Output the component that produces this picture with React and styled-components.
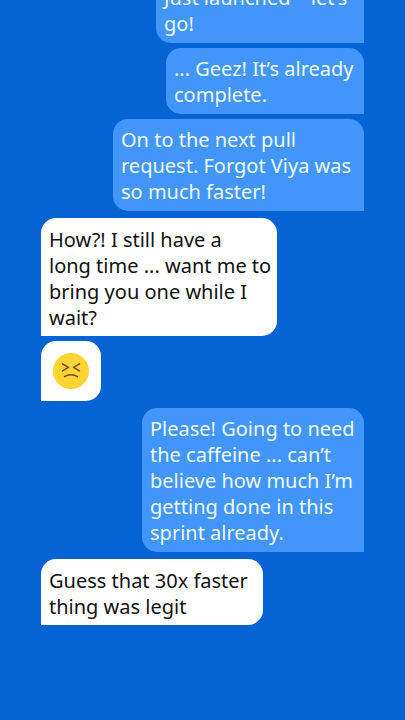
import React from 'react';
import styled, { createGlobalStyle } from 'styled-components';

const GlobalStyle = createGlobalStyle`
  * {
    box-sizing: border-box;
  }
  body {
    margin: 0;
    background: #0563d3;
  }
`;

// newest message stays above the bottom edge, older ones run off the top
const Screen = styled.main`
  display: flex;
  flex-direction: column;
  justify-content: flex-end;
  gap: 7px;
  height: 100vh;
  padding: 0 41px 95px;
  overflow: hidden;
  background: #0563d3;
  font-family: 'Noto Sans', 'Open Sans', sans-serif;
  font-size: 20px;
  line-height: 26px;
`;

const Group = styled.section`
  display: flex;
  flex-direction: column;
  align-items: ${props => (props.$mine ? 'flex-end' : 'flex-start')};
  gap: 5px;
`;

const Bubble = styled.p`
  flex: none;
  width: ${props => props.$width}px;
  max-width: 100%;
  margin: 0;
  padding: ${props => (props.$mine ? '8px 0 6px 8px' : '9px 0 5px 8px')};
  border-radius: ${props => (props.$mine ? '15px 15px 0 15px' : '15px 15px 15px 0')};
  background: ${props => (props.$mine ? '#4296f9' : '#fff')};
  color: ${props => (props.$mine ? '#eefaff' : '#111')};
  white-space: pre-line;
`;

const Sticker = styled.div`
  flex: none;
  display: flex;
  align-items: center;
  justify-content: center;
  width: 60px;
  height: 60px;
  border-radius: 15px 15px 15px 0;
  background: #fff;
`;

const groups = [
  {
    mine: true,
    messages: [
      { width: 208, text: 'Just launched – let’s\ngo!' },
      { width: 198, text: '... Geez! It’s already\ncomplete.' },
      { width: 251, text: 'On to the next pull\nrequest. Forgot Viya was\nso much faster!' },
    ],
  },
  {
    mine: false,
    messages: [
      { width: 236, text: 'How?! I still have a\nlong time ... want me to\nbring you one while I\nwait?' },
      { sticker: true },
    ],
  },
  {
    mine: true,
    messages: [
      {
        width: 222,
        text: 'Please! Going to need\nthe caffeine ... can’t\nbelieve how much I’m\ngetting done in this\nsprint already.',
      },
    ],
  },
  {
    mine: false,
    messages: [{ width: 222, text: 'Guess that 30x faster\nthing was legit' }],
  },
];

const Grimace = () => (
  <svg width="36" height="36" viewBox="0 0 36 36" role="img" aria-label="Frustrated face">
    <circle cx="18" cy="18" r="18" fill="#fed433" />
    <g fill="none" stroke="#75491e" strokeWidth="1.5" strokeLinecap="round" strokeLinejoin="round">
      <path d="M9.5 10.800l6 3.600-6 3.500" />
      <path d="M26.5 10.800l-6 3.600 6 3.500" />
      <path d="M11.500 23.700c3.600-2.500 9.400-2.500 13 0" />
    </g>
  </svg>
);

const App = () => (
  <>
    <GlobalStyle />
    <Screen>
      {groups.map((group, i) => (
        <Group key={i} $mine={group.mine}>
          {group.messages.map((message, j) => (
            message.sticker ? (
              <Sticker key={j}><Grimace /></Sticker>
            ) : (
              <Bubble key={j} $mine={group.mine} $width={message.width}>{message.text}</Bubble>
            )
          ))}
        </Group>
      ))}
    </Screen>
  </>
);

export default App;
